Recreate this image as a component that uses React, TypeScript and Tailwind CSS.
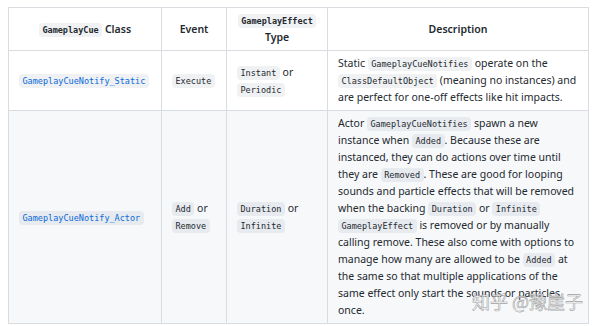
import React from 'react';

const Code: React.FC<{ children: React.ReactNode; link?: boolean }> = ({ children, link }) => (
  <code
    className={
      'rounded-[4px] bg-[rgba(175,184,193,0.2)] px-[3.5px] py-[2px] font-["DejaVu_Sans_Mono",monospace] text-[8.5px] leading-[0] ' +
      (link ? 'text-[#0969da]' : '')
    }
  >
    {children}
  </code>
);

const App: React.FC = () => {
  const th = 'border border-[#d9dde2] px-[10px] py-[4px] text-center font-semibold align-middle';
  const td = 'border border-[#d9dde2] px-[10px] py-[4px] text-left align-middle';

  return (
    <div className="relative h-[326px] w-[600px] overflow-hidden bg-white pl-[8px] pt-[7px] font-['Noto_Sans',sans-serif] text-[10.5px] leading-[17px] text-[#24292f]">
      <table className="w-[580px] table-fixed border-collapse">
        <colgroup>
          <col className="w-[153px]" />
          <col className="w-[65px]" />
          <col className="w-[101px]" />
          <col className="w-[261px]" />
        </colgroup>
        <thead>
          <tr>
            <th className={th}>
              <Code>GameplayCue</Code> Class
            </th>
            <th className={th}>Event</th>
            <th className={th}>
              <Code>GameplayEffect</Code>
              <br />
              Type
            </th>
            <th className={th}>Description</th>
          </tr>
        </thead>
        <tbody>
          <tr>
            <td className={td}>
              <Code link>GameplayCueNotify_Static</Code>
            </td>
            <td className={td}>
              <Code>Execute</Code>
            </td>
            <td className={td}>
              <Code>Instant</Code> or
              <br />
              <Code>Periodic</Code>
            </td>
            <td className={td}>
              Static <Code>GameplayCueNotifies</Code> operate on the
              <br />
              <Code>ClassDefaultObject</Code> (meaning no instances) and
              <br />
              are perfect for one-off effects like hit impacts.
            </td>
          </tr>
          <tr className="bg-[#f6f8fa]">
            <td className={td}>
              <Code link>GameplayCueNotify_Actor</Code>
            </td>
            <td className={td}>
              <Code>Add</Code> or
              <br />
              <Code>Remove</Code>
            </td>
            <td className={td}>
              <Code>Duration</Code> or
              <br />
              <Code>Infinite</Code>
            </td>
            <td className={td}>
              Actor <Code>GameplayCueNotifies</Code> spawn a new
              <br />
              instance when <Code>Added</Code>. Because these are
              <br />
              instanced, they can do actions over time until
              <br />
              they are <Code>Removed</Code>. These are good for looping
              <br />
              sounds and particle effects that will be removed
              <br />
              when the backing <Code>Duration</Code> or <Code>Infinite</Code>
              <br />
              <Code>GameplayEffect</Code> is removed or by manually
              <br />
              calling remove. These also come with options to
              <br />
              manage how many are allowed to be <Code>Added</Code> at
              <br />
              the same so that multiple applications of the
              <br />
              same effect only start the sounds or particles
              <br />
              once.
            </td>
          </tr>
        </tbody>
      </table>

      {/* watermark */}
      <div className="absolute left-[472px] top-[290px] whitespace-nowrap font-['Noto_Sans_CJK_SC',sans-serif] text-[18px] leading-[22px] text-[rgba(255,255,255,0.85)] [-webkit-text-stroke:0.6px_rgba(130,130,130,0.75)]">
        知乎 @豫崖子
      </div>
    </div>
  );
};

export default App;
